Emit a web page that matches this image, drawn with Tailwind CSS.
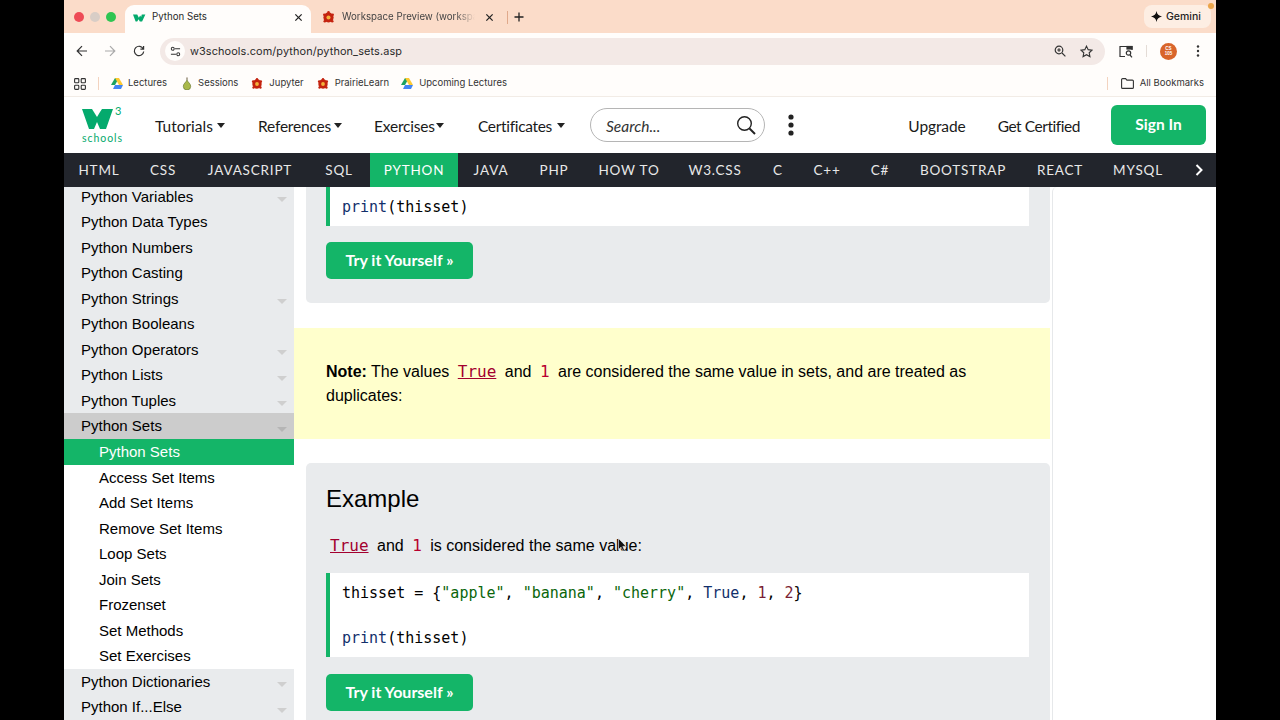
<!DOCTYPE html>
<html><head><meta charset="utf-8"><script src="https://cdn.jsdelivr.net/npm/@tailwindcss/browser@4"></script></head>
<body class="bg-black">
<div class="relative w-[1280px] h-[720px] overflow-hidden bg-black px-16">
<div class="w-[1152px] h-[720px] flex flex-col overflow-hidden bg-white font-['Liberation_Sans',sans-serif] text-black">

<!-- tab strip -->
<div class="h-[33px] shrink-0 bg-[#fbdcc9] flex items-start font-['Inter',sans-serif] text-[9.7px] text-[#2a2a2a]">
  <div class="flex items-center gap-[6px] h-[33px] pl-[10px] w-[61px]">
    <span class="w-[10px] h-[10px] rounded-full bg-[#ee4b56]"></span><span class="w-[10px] h-[10px] rounded-full bg-[#d8cdc6]"></span><span class="w-[10px] h-[10px] rounded-full bg-[#2fc552]"></span>
  </div>
  <div class="mt-[5px] w-[186px] h-[28px] bg-[#fffdfb] rounded-t-[9px] flex items-center pl-[8px] pb-[3px]">
    <svg class="w-[13px] h-[10px]" viewBox="0 0 40 26"><polygon fill="#04aa6d" points="0,2 13,2 18,12 22,5 25,10 27,2 38,2 28,24 21,24 17,17 13,24 8,24"/></svg>
    <span class="ml-[6px] w-[142px]">Python Sets</span>
    <svg class="w-[9px] h-[9px]" viewBox="0 0 10 10"><path d="M1.5 1.5l7 7M8.5 1.5l-7 7" stroke="#222" stroke-width="1.4"/></svg>
  </div>
  <div class="flex items-center h-[33px] ml-[11px] pt-px">
    <svg class="w-[13px] h-[13px]" viewBox="0 0 14 14"><circle cx="7" cy="7" r="5.5" fill="#c4230f"/><circle cx="7" cy="7" r="2.2" fill="#f3b33d"/><circle cx="2.5" cy="4" r="1.4" fill="#c4230f"/><circle cx="11.5" cy="4" r="1.4" fill="#c4230f"/><circle cx="7" cy="1.5" r="1.4" fill="#c4230f"/><circle cx="3" cy="11" r="1.4" fill="#c4230f"/><circle cx="11" cy="11" r="1.4" fill="#c4230f"/></svg>
    <span class="ml-[7px] w-[133px] whitespace-nowrap overflow-hidden text-[#444] [mask-image:linear-gradient(to_right,black_85%,transparent)]">Workspace Preview (workspace)</span>
    <svg class="ml-[10px] w-[9px] h-[9px]" viewBox="0 0 10 10"><path d="M1.5 1.5l7 7M8.5 1.5l-7 7" stroke="#222" stroke-width="1.4"/></svg>
    <span class="ml-[13px] w-px h-[13px] bg-[#e0a98b]"></span>
    <svg class="ml-[6px] w-[10px] h-[10px]" viewBox="0 0 10 10"><path d="M5 .5v9M.5 5h9" stroke="#222" stroke-width="1.3"/></svg>
  </div>
  <div class="ml-auto mr-[5px] mt-[5px] relative w-[67px] h-[23px] rounded-[8px] bg-[#fdeee3] flex items-center pl-[7px] gap-[4px] text-[10.5px] font-medium text-[#222]">
    <svg class="w-[11px] h-[11px]" viewBox="0 0 12 12"><path d="M6 0C6.6 3.5 8.5 5.4 12 6 8.5 6.6 6.6 8.5 6 12 5.4 8.5 3.5 6.6 0 6 3.5 5.4 5.4 3.5 6 0z" fill="#111"/></svg>Gemini
    <span class="absolute right-[-3px] top-[-2px] w-[6px] h-[6px] rounded-full bg-[#eba54a]"></span>
  </div>
</div>

<!-- toolbar -->
<div class="h-[35px] shrink-0 bg-[#fffdfb] flex items-center rounded-tl-[8px] rounded-tr-[8px] pt-px">
  <svg class="ml-[12px] w-[12px] h-[12px]" viewBox="0 0 12 12" fill="none" stroke="#333" stroke-width="1.2"><path d="M11 6H1.5M6 1.2L1.2 6 6 10.8"/></svg>
  <svg class="ml-[16px] w-[12px] h-[12px]" viewBox="0 0 12 12" fill="none" stroke="#aaa" stroke-width="1.2"><path d="M1 6h9.5M6 1.2L10.8 6 6 10.8"/></svg>
  <svg class="ml-[17px] w-[12px] h-[12px]" viewBox="0 0 12 12" fill="none" stroke="#333" stroke-width="1.2"><path d="M10.3 4A4.7 4.7 0 1 0 10.7 6.5M10.6 1v3.2H7.4"/></svg>
  <div class="ml-[15px] w-[945px] h-[27px] rounded-full bg-[#f3e9e6] flex items-center pl-[5px]">
    <span class="w-[20px] h-[20px] rounded-full bg-[#fffdfb] flex items-center justify-center">
      <svg class="w-[11px] h-[11px]" viewBox="0 0 12 12" fill="none" stroke="#333" stroke-width="1.1"><circle cx="3" cy="3" r="1.6"/><path d="M5.5 3H11M1 9h5.5"/><circle cx="9" cy="9" r="1.6"/></svg>
    </span>
    <span class="ml-[5px] text-[10.9px] tracking-[.01em] text-[#2a2a2a] font-['Inter',sans-serif]">w3schools.com/python/python_sets.asp</span>
    <svg class="ml-auto w-[12px] h-[12px]" viewBox="0 0 12 12" fill="none" stroke="#333" stroke-width="1.2"><circle cx="5" cy="5" r="3.8"/><path d="M8 8l3.4 3.4M3.2 5h3.6M5 3.2v3.6"/></svg>
    <svg class="ml-[14px] mr-[12px] w-[13px] h-[13px]" viewBox="0 0 14 14" fill="none" stroke="#333" stroke-width="1.2"><path d="M7 1.2l1.8 3.8 4.1.5-3 2.9.8 4.1L7 10.5l-3.7 2 .8-4.1-3-2.9 4.1-.5z"/></svg>
  </div>
  <svg class="ml-[14px] w-[14px] h-[13px]" viewBox="0 0 14 13" fill="none" stroke="#333" stroke-width="1.2"><path d="M6 11.5H1V1.5h12V5"/><rect x="8" y="1.5" width="5" height="2.5" fill="#333"/><circle cx="9.5" cy="8" r="2.2"/><path d="M11 10l2 2.3"/></svg>
  <span class="ml-[13px] w-px h-[12px] bg-[#e4dcd6]"></span>
  <span class="ml-[13px] w-[17px] h-[17px] rounded-full bg-[#d9652b] text-white flex flex-col items-center justify-center text-[4.5px] leading-[5px] font-bold"><span>CS</span><span>105</span></span>
  <svg class="ml-[19px] w-[4px] h-[12px]" viewBox="0 0 4 12" fill="#333"><circle cx="2" cy="1.5" r="1.2"/><circle cx="2" cy="6" r="1.2"/><circle cx="2" cy="10.5" r="1.2"/></svg>
</div>

<!-- bookmarks -->
<div class="h-[29px] shrink-0 bg-[#fffdfb] border-b border-[#f2ece6] flex items-center pt-[3px] font-['Inter',sans-serif] text-[9.5px] text-[#333]">
  <svg class="ml-[10px] w-[12px] h-[12px]" viewBox="0 0 12 12" fill="none" stroke="#333" stroke-width="1.1"><rect x=".6" y=".6" width="4.2" height="4.2" rx=".8"/><rect x="7.2" y=".6" width="4.2" height="4.2" rx=".8"/><rect x=".6" y="7.2" width="4.2" height="4.2" rx=".8"/><rect x="7.2" y="7.2" width="4.2" height="4.2" rx=".8"/></svg>
  <span class="ml-[12px] w-px h-[13px] bg-[#f3d3bf]"></span>
  <svg class="ml-[12px] w-[12px] h-[11px]" viewBox="0 0 12 11"><path d="M4 0h4L4 7H0z" fill="#1ba261"/><path d="M8 0l4 7H8L4 0z" fill="#fcc934"/><path d="M2 11l2-4h8l-2 4z" fill="#4285f4"/></svg>
  <span class="ml-[5px]">Lectures</span>
  <svg class="ml-[15px] w-[10px] h-[13px]" viewBox="0 0 10 14"><path d="M5 3C4 6 1 7 1 10a4 4 0 0 0 8 0C9 7 6 6 5 3z" fill="#a9b94a" stroke="#5a6a2a" stroke-width=".6"/><path d="M5 3V.5" stroke="#5a4a2a"/></svg>
  <span class="ml-[6px]">Sessions</span>
  <svg class="ml-[13px] w-[12px] h-[12px]" viewBox="0 0 14 14"><circle cx="7" cy="7" r="5.5" fill="#c4230f"/><circle cx="7" cy="7" r="2.2" fill="#f3b33d"/><circle cx="2.5" cy="4" r="1.4" fill="#c4230f"/><circle cx="11.5" cy="4" r="1.4" fill="#c4230f"/><circle cx="7" cy="1.5" r="1.4" fill="#c4230f"/><circle cx="3" cy="11" r="1.4" fill="#c4230f"/><circle cx="11" cy="11" r="1.4" fill="#c4230f"/></svg>
  <span class="ml-[6px]">Jupyter</span>
  <svg class="ml-[13px] w-[12px] h-[12px]" viewBox="0 0 14 14"><circle cx="7" cy="7" r="5.5" fill="#c4230f"/><circle cx="7" cy="7" r="2.2" fill="#f3b33d"/><circle cx="2.5" cy="4" r="1.4" fill="#c4230f"/><circle cx="11.5" cy="4" r="1.4" fill="#c4230f"/><circle cx="7" cy="1.5" r="1.4" fill="#c4230f"/><circle cx="3" cy="11" r="1.4" fill="#c4230f"/><circle cx="11" cy="11" r="1.4" fill="#c4230f"/></svg>
  <span class="ml-[6px]">PrairieLearn</span>
  <svg class="ml-[12px] w-[12px] h-[11px]" viewBox="0 0 12 11"><path d="M4 0h4L4 7H0z" fill="#1ba261"/><path d="M8 0l4 7H8L4 0z" fill="#fcc934"/><path d="M2 11l2-4h8l-2 4z" fill="#4285f4"/></svg>
  <span class="ml-[6px]">Upcoming Lectures</span>
  <span class="ml-auto w-px h-[13px] bg-[#f3d3bf]"></span>
  <svg class="ml-[13px] w-[13px] h-[11px]" viewBox="0 0 13 11" fill="none" stroke="#333" stroke-width="1.1"><path d="M.6 1.6A1 1 0 0 1 1.6.6h3l1.3 1.5h5.5a1 1 0 0 1 1 1v6.3a1 1 0 0 1-1 1H1.6a1 1 0 0 1-1-1z"/></svg>
  <span class="ml-[6px] mr-[12px]">All Bookmarks</span>
</div>

<!-- w3 header -->
<div class="h-[56px] shrink-0 bg-white flex items-center font-['Lato',sans-serif] text-[15.5px] text-[#1a1a1a]">
  <div class="ml-[18px] w-[40px] h-[42px] relative text-[#04aa6d]">
    <svg class="absolute left-0 top-[5px] w-[31px] h-[20px]" viewBox="0 0 31 20"><polygon fill="#04aa6d" points="0,0 10,0 15,8 18,3 20,0 31,0 24,20 18,20 15,13 12,20 7,20"/></svg>
    <span class="absolute left-[33px] top-[1px] text-[11px] leading-[12px]">3</span>
    <span class="absolute left-0 top-[28px] text-[10.5px] leading-[12px] tracking-[.09em]">schools</span>
  </div>
  <span class="ml-[33px] w-[59px] pt-[3px]">Tutorials</span><span class="ml-[3px] w-0 h-0 mt-[1px] border-x-[4px] border-x-transparent border-t-[5px] border-t-[#222]"></span>
  <span class="ml-[33px] w-[73px] pt-[3px] whitespace-nowrap tracking-[-.2px]">References</span><span class="ml-[3px] w-0 h-0 mt-[1px] border-x-[4px] border-x-transparent border-t-[5px] border-t-[#222]"></span>
  <span class="ml-[32px] w-[59px] pt-[3px] whitespace-nowrap tracking-[-.2px]">Exercises</span><span class="ml-[3px] w-0 h-0 mt-[1px] border-x-[4px] border-x-transparent border-t-[5px] border-t-[#222]"></span>
  <span class="ml-[34px] w-[76px] pt-[3px] whitespace-nowrap tracking-[-.33px]">Certificates</span><span class="ml-[3px] w-0 h-0 mt-[1px] border-x-[4px] border-x-transparent border-t-[5px] border-t-[#222]"></span>
  <div class="ml-[25px] w-[175px] h-[34px] rounded-full border border-[#b5b5b5] flex items-center pl-[15px] pr-[8px] italic text-[#333]"><span class="pt-[3px]">Search...</span>
    <svg class="ml-auto w-[20px] h-[20px]" viewBox="0 0 20 20" fill="none" stroke="#222" stroke-width="1.4"><circle cx="8.5" cy="8.5" r="6.8"/><path d="M13.5 13.5l5.5 5.5" stroke-width="2"/></svg>
  </div>
  <svg class="ml-[23px] w-[6px] h-[22px]" viewBox="0 0 6 22" fill="#222"><circle cx="3" cy="3" r="2.6"/><circle cx="3" cy="11" r="2.6"/><circle cx="3" cy="19" r="2.6"/></svg>
  <span class="ml-auto pt-[3px] tracking-[-.1px]">Upgrade</span>
  <span class="ml-[32px] pt-[3px] tracking-[-.45px]">Get Certified</span>
  <span class="ml-[31px] mr-[10px] w-[95px] h-[40px] rounded-[6px] bg-[#14b568] text-white font-bold flex items-center justify-center">Sign In</span>
</div>

<!-- nav -->
<div class="h-[34px] shrink-0 bg-[#22252c] flex items-center text-center text-[13.5px] tracking-[.06em] text-[#e8e8e8] font-['Lato',sans-serif] leading-[34px]">
  <span class="w-[70px]">HTML</span><span class="w-[58px]">CSS</span><span class="w-[116px]">JAVASCRIPT</span><span class="w-[62px]">SQL</span><span class="w-[88px] bg-[#14b568] text-white">PYTHON</span><span class="w-[66px]">JAVA</span><span class="w-[60px]">PHP</span><span class="w-[90px]">HOW TO</span><span class="w-[82px]">W3.CSS</span><span class="w-[44px]">C</span><span class="w-[54px]">C++</span><span class="w-[52px]">C#</span><span class="w-[114px]">BOOTSTRAP</span><span class="w-[80px]">REACT</span><span class="w-[76px]">MYSQL</span>
  <span class="w-[40px] flex justify-center pl-[6px]"><svg class="w-[8px] h-[12px]" viewBox="0 0 8 12" fill="none" stroke="#fff" stroke-width="2"><path d="M1.5 1l5 5-5 5"/></svg></span>
</div>

<!-- body -->
<div class="flex-1 flex min-h-0">
  <div class="w-[230px] shrink-0 overflow-hidden bg-[#e9ebed] text-[15px] leading-[25.56px] text-black">
    <div class="-mt-[3.5px]">
      <div class="h-[25.56px] pl-[17px] flex items-center justify-between pr-[7px]">Python Variables<span class="mt-[6px] w-0 h-0 border-x-[5px] border-x-transparent border-t-[5px] border-t-[#cfcfcf]"></span></div>
      <div class="h-[25.56px] pl-[17px]">Python Data Types</div>
      <div class="h-[25.56px] pl-[17px]">Python Numbers</div>
      <div class="h-[25.56px] pl-[17px]">Python Casting</div>
      <div class="h-[25.56px] pl-[17px] flex items-center justify-between pr-[7px]">Python Strings<span class="mt-[6px] w-0 h-0 border-x-[5px] border-x-transparent border-t-[5px] border-t-[#cfcfcf]"></span></div>
      <div class="h-[25.56px] pl-[17px]">Python Booleans</div>
      <div class="h-[25.56px] pl-[17px] flex items-center justify-between pr-[7px]">Python Operators<span class="mt-[6px] w-0 h-0 border-x-[5px] border-x-transparent border-t-[5px] border-t-[#cfcfcf]"></span></div>
      <div class="h-[25.56px] pl-[17px] flex items-center justify-between pr-[7px]">Python Lists<span class="mt-[6px] w-0 h-0 border-x-[5px] border-x-transparent border-t-[5px] border-t-[#cfcfcf]"></span></div>
      <div class="h-[25.56px] pl-[17px] flex items-center justify-between pr-[7px]">Python Tuples<span class="mt-[6px] w-0 h-0 border-x-[5px] border-x-transparent border-t-[5px] border-t-[#cfcfcf]"></span></div>
      <div class="h-[25.56px] pl-[17px] flex items-center justify-between pr-[7px] bg-[#cccccc]">Python Sets<span class="mt-[6px] w-0 h-0 border-x-[5px] border-x-transparent border-t-[5px] border-t-[#b5b5b5]"></span></div>
      <div class="bg-white pl-[35px]">
        <div class="h-[25.56px] -ml-[35px] pl-[35px] bg-[#14b568] text-white">Python Sets</div>
        <div class="h-[25.56px]">Access Set Items</div>
        <div class="h-[25.56px]">Add Set Items</div>
        <div class="h-[25.56px]">Remove Set Items</div>
        <div class="h-[25.56px]">Loop Sets</div>
        <div class="h-[25.56px]">Join Sets</div>
        <div class="h-[25.56px]">Frozenset</div>
        <div class="h-[25.56px]">Set Methods</div>
        <div class="h-[25.56px]">Set Exercises</div>
      </div>
      <div class="h-[25.56px] pl-[17px] flex items-center justify-between pr-[7px]">Python Dictionaries<span class="mt-[6px] w-0 h-0 border-x-[5px] border-x-transparent border-t-[5px] border-t-[#cfcfcf]"></span></div>
      <div class="h-[25.56px] pl-[17px] flex items-center justify-between pr-[7px]">Python If...Else<span class="mt-[6px] w-0 h-0 border-x-[5px] border-x-transparent border-t-[5px] border-t-[#cfcfcf]"></span></div>
    </div>
  </div>

  <div class="w-[756px] shrink-0 text-[16px] leading-[24px] overflow-hidden">
    <div class="ml-[12px] bg-[#e9ebed] rounded-b-[5px] pl-[20px] pr-[21px] pb-[24px]">
      <div class="bg-white border-l-4 border-[#14b568] pl-[12px] pt-[9px] h-[39px] font-['DejaVu_Sans_Mono',monospace] text-[15px] leading-[22.5px]"><span class="text-[#12306b]">print</span>(thisset)</div>
      <div class="mt-[16px] w-[147px] h-[37px] rounded-[5px] bg-[#14b568] text-white font-['Lato',sans-serif] font-bold text-[16px] flex items-center justify-center pb-[2px]">Try it Yourself »</div>
    </div>
    <div class="mt-[25px] h-[111px] bg-[#ffffcc] pl-[32px] pr-[40px] pt-[32px]"><b>Note:</b> The values <span class="mx-1 underline text-[#a3002f] font-['DejaVu_Sans_Mono',monospace]">True</span> and <span class="mx-1 text-[#b8002f] font-['DejaVu_Sans_Mono',monospace]">1</span> are considered the same value in sets, and are treated as duplicates:</div>
    <div class="mt-[24px] ml-[12px] bg-[#e9ebed] rounded-t-[5px] pl-[20px] pr-[21px] pt-[20px]">
      <div class="text-[24px] leading-[32px]">Example</div>
      <div class="mt-[19px]"><span class="mx-1 underline text-[#a3002f] font-['DejaVu_Sans_Mono',monospace]">True</span> and <span class="mx-1 text-[#b8002f] font-['DejaVu_Sans_Mono',monospace]">1</span> is considered the same value:</div>
      <div class="mt-[15px] bg-white border-l-4 border-[#14b568] pl-[12px] pt-[9px] h-[84px] font-['DejaVu_Sans_Mono',monospace] text-[15px] leading-[22.5px]">
        <div>thisset = {<span class="text-[#0b660b]">"apple"</span>, <span class="text-[#0b660b]">"banana"</span>, <span class="text-[#0b660b]">"cherry"</span>, <span class="text-[#12306b]">True</span>, <span class="text-[#7a1f33]">1</span>, <span class="text-[#7a1f33]">2</span>}</div>
        <div class="h-[22.5px]"></div>
        <div><span class="text-[#12306b]">print</span>(thisset)</div>
      </div>
      <div class="mt-[17px] w-[147px] h-[37px] rounded-[5px] bg-[#14b568] text-white font-['Lato',sans-serif] font-bold text-[16px] flex items-center justify-center pb-[2px]">Try it Yourself »</div>
      <div class="h-[20px]"></div>
    </div>
  </div>

  <div class="ml-[2px] flex-1 bg-white rounded-tl-[5px] border-l border-[#e6e8ea]"></div>
</div>
</div>

<!-- mouse cursor -->
<svg class="absolute left-[618px] top-[538px] w-[9px] h-[14px]" viewBox="0 0 9 14"><path d="M.5.5v11l2.6-2.4 1.8 4 1.7-.8-1.8-3.9h3.4z" fill="#111" stroke="#eee" stroke-width=".6"/></svg>
</div>
</body></html>
